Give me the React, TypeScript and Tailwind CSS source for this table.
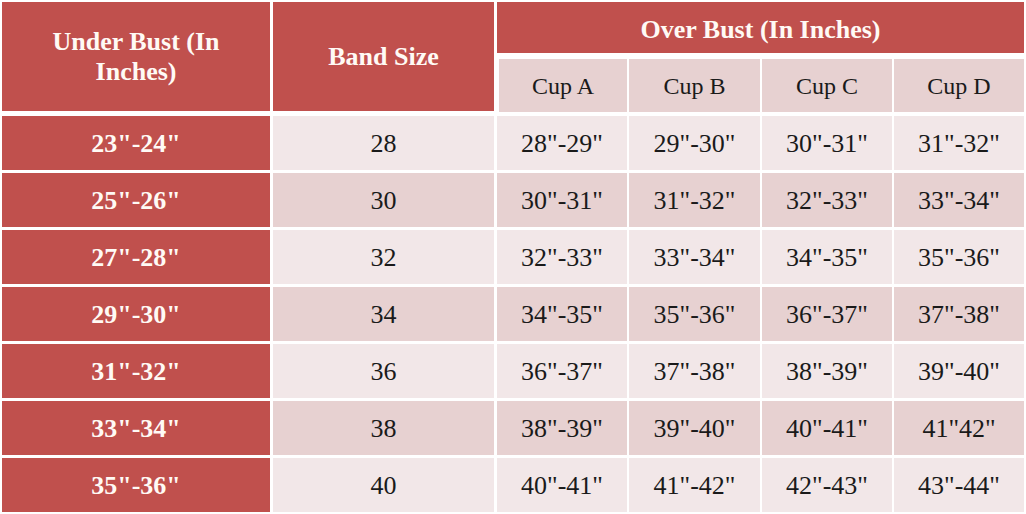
const rows = [
  { under: '23"-24"', band: "28", cups: ['28"-29"', '29"-30"', '30"-31"', '31"-32"'] },
  { under: '25"-26"', band: "30", cups: ['30"-31"', '31"-32"', '32"-33"', '33"-34"'] },
  { under: '27"-28"', band: "32", cups: ['32"-33"', '33"-34"', '34"-35"', '35"-36"'] },
  { under: '29"-30"', band: "34", cups: ['34"-35"', '35"-36"', '36"-37"', '37"-38"'] },
  { under: '31"-32"', band: "36", cups: ['36"-37"', '37"-38"', '38"-39"', '39"-40"'] },
  { under: '33"-34"', band: "38", cups: ['38"-39"', '39"-40"', '40"-41"', '41"42"'] },
  { under: '35"-36"', band: "40", cups: ['40"-41"', '41"-42"', '42"-43"', '43"-44"'] },
];

const cupWidths = ["w-[130px]", "w-[131px]", "w-[130px]", "w-[130px]"];

export default function App() {
  return (
    <div className="w-[1026px] h-[514px] bg-white pt-[2px] pl-[2px] font-['Liberation_Serif',serif] overflow-hidden">
      {/* header */}
      <div className="flex items-start h-[114px]">
        <div className="w-[268px] h-[109px] bg-[#c0504d] text-[#fffaf5] font-bold text-[26px] leading-[30px] flex items-center justify-center text-center">
          Under Bust (In<br />Inches)
        </div>
        <div className="w-[221px] h-[109px] ml-[3px] bg-[#c0504d] text-[#fffaf5] font-bold text-[26px] flex items-center justify-center">
          Band Size
        </div>
        <div className="ml-[3px] flex flex-col">
          <div className="h-[51px] w-[527px] bg-[#c0504d] text-[#fffaf5] font-bold text-[26px] flex items-center justify-center pt-[3px]">
            Over Bust (In Inches)
          </div>
          <div className="flex gap-[2px] mt-[6px]">
            {["Cup A", "Cup B", "Cup C", "Cup D"].map((c, i) => (
              <div key={c} className={`${i === 0 ? "ml-[2px] w-[128px]" : cupWidths[i]} h-[53px] bg-[#e7d1d1] text-[#1a1a1a] text-[24px] flex items-center justify-center`}>
                {c}
              </div>
            ))}
          </div>
        </div>
      </div>

      {/* body */}
      <div className="flex flex-col gap-[3px]">
        {rows.map((r, idx) => {
          const shade = idx % 2 === 0 ? "bg-[#f2e7e8]" : "bg-[#e7d1d1]";
          return (
            <div key={r.under} className="flex h-[54px]">
              <div className="w-[268px] bg-[#c0504d] text-[#fffaf5] font-bold text-[26px] flex items-center justify-center">
                {r.under}
              </div>
              <div className={`w-[221px] ml-[3px] ${shade} text-[#1a1a1a] text-[26px] flex items-center justify-center`}>
                {r.band}
              </div>
              <div className="flex gap-[2px] ml-[3px]">
                {r.cups.map((c, i) => (
                  <div key={i} className={`${cupWidths[i]} ${shade} text-[#1a1a1a] text-[26px] flex items-center justify-center`}>
                    {c}
                  </div>
                ))}
              </div>
            </div>
          );
        })}
      </div>
    </div>
  );
}
